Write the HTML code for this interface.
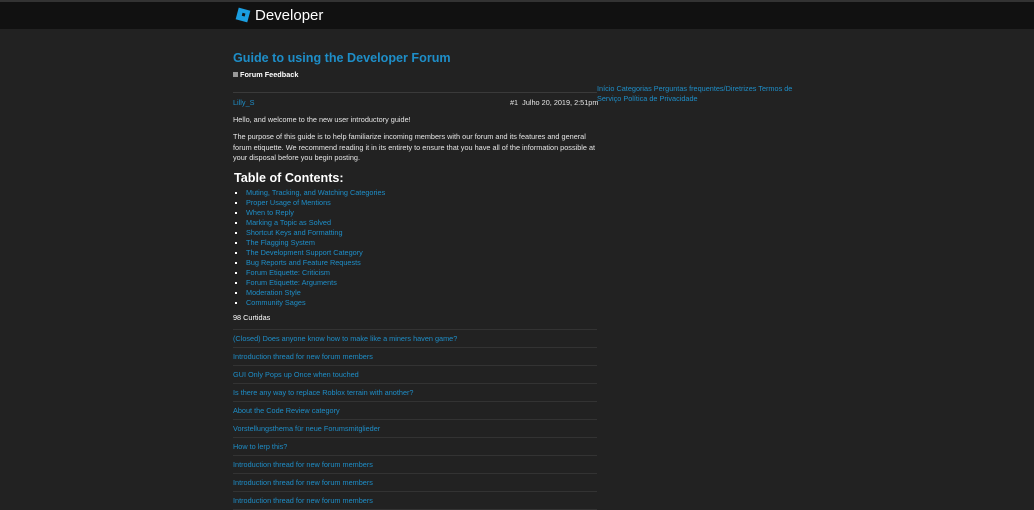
<!DOCTYPE html><html><head><style>
body{margin:0;background:#222;font-family:"Liberation Sans",Arial,sans-serif;width:1034px;height:508px;overflow:hidden;color:#e6e6e6;font-size:7.3px}
a{color:#1e8ec8;text-decoration:none}
.hd{position:absolute;top:0;left:0;width:1034px;height:29px;background:#111;border-top:2px solid #333;box-sizing:border-box}
.logo{position:absolute;left:237px;top:7px;font-size:15px;color:#fff}
.logo i{display:inline-block;width:12px;height:12px;background:#1a9ee0;transform:rotate(15deg);margin-right:6px;vertical-align:-1px;position:relative}
.logo i::after{content:"";position:absolute;left:5px;top:4px;width:3px;height:3px;background:#111}
.ab{position:absolute}
h1{position:absolute;left:233px;top:51px;margin:0;font-size:12.6px;color:#1e8ec8;font-weight:bold}
.cat{left:233px;top:70px;font-weight:bold;color:#fff}
.cat b{display:inline-block;width:5px;height:5px;background:#999;margin-right:2px}
.sep{height:1px;background:#3a3a3a;width:364px;left:233px}
ul{margin:0;padding-left:13px;list-style:square}
li{height:10px;line-height:10px}
li::marker{color:#fff}
.t{left:233px;width:364px}
.t div{height:17px;line-height:17px;border-bottom:1px solid #333}
</style></head><body>
<div class="hd"></div>
<div class="logo"><i></i>Developer</div>
<h1>Guide to using the Developer Forum</h1>
<div class="ab cat"><b></b>Forum Feedback</div>
<div class="ab sep" style="top:92px"></div>
<div class="ab" style="left:597px;top:84px;width:200px;line-height:10px"><a>Início Categorias Perguntas frequentes/Diretrizes Termos de Serviço Política de Privacidade</a></div>
<div class="ab" style="left:233px;top:98px"><a>Lilly_S</a></div>
<div class="ab" style="left:510px;top:98px">#1 &nbsp;Julho 20, 2019, 2:51pm</div>
<div class="ab" style="left:233px;top:115px">Hello, and welcome to the new user introductory guide!</div>
<div class="ab" style="left:233px;top:132px;width:366px;line-height:10.5px">The purpose of this guide is to help familiarize incoming members with our forum and its features and general forum etiquette. We recommend reading it in its entirety to ensure that you have all of the information possible at your disposal before you begin posting.</div>
<div class="ab" style="left:234px;top:171px;font-size:12.6px;font-weight:bold;color:#fff">Table of Contents:</div>
<div class="ab" style="left:233px;top:188px"><ul>
<li><a>Muting, Tracking, and Watching Categories</a></li><li><a>Proper Usage of Mentions</a></li><li><a>When to Reply</a></li><li><a>Marking a Topic as Solved</a></li><li><a>Shortcut Keys and Formatting</a></li><li><a>The Flagging System</a></li><li><a>The Development Support Category</a></li><li><a>Bug Reports and Feature Requests</a></li><li><a>Forum Etiquette: Criticism</a></li><li><a>Forum Etiquette: Arguments</a></li><li><a>Moderation Style</a></li><li><a>Community Sages</a></li></ul></div>
<div class="ab" style="left:233px;top:313px;color:#fff">98 Curtidas</div>
<div class="ab sep" style="top:329px;background:#333"></div>
<div class="ab t" style="top:330px">
<div><a>(Closed) Does anyone know how to make like a miners haven game?</a></div>
<div><a>Introduction thread for new forum members</a></div>
<div><a>GUI Only Pops up Once when touched</a></div>
<div><a>Is there any way to replace Roblox terrain with another?</a></div>
<div><a>About the Code Review category</a></div>
<div><a>Vorstellungsthema für neue Forumsmitglieder</a></div>
<div><a>How to lerp this?</a></div>
<div><a>Introduction thread for new forum members</a></div>
<div><a>Introduction thread for new forum members</a></div>
<div><a>Introduction thread for new forum members</a></div>
</div>
</body></html>
